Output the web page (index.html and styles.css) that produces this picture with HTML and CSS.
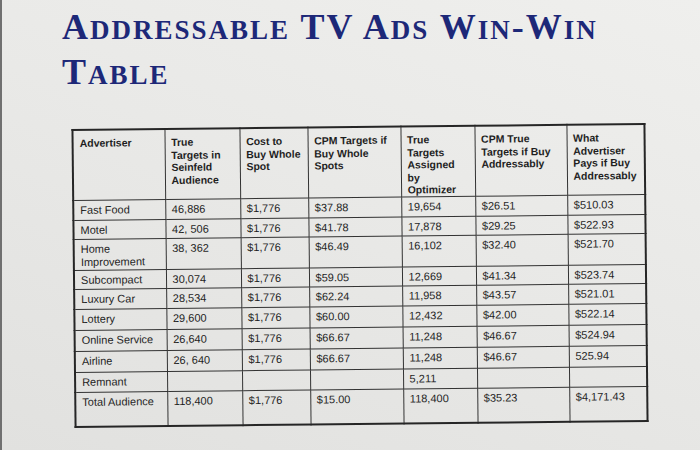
FILE: index.html
```html
<!DOCTYPE html>
<html>
<head>
<meta charset="utf-8">
<link rel="stylesheet" href="styles.css">
</head>
<body>
<div class="slide">
  <h1 class="title">A<span class="sc">DDRESSABLE</span> TV A<span class="sc">DS</span> W<span class="sc">IN</span>-W<span class="sc">IN</span><br>T<span class="sc">ABLE</span></h1>
  <table class="grid">
    <colgroup>
      <col class="c1"><col class="c2"><col class="c3"><col class="c4"><col class="c5"><col class="c6"><col class="c7">
    </colgroup>
    <tr class="head">
      <th>Advertiser</th>
      <th>True<br>Targets in<br>Seinfeld<br>Audience</th>
      <th>Cost to<br>Buy Whole<br>Spot</th>
      <th>CPM Targets if<br>Buy Whole<br>Spots</th>
      <th>True<br>Targets<br>Assigned<br>by<br>Optimizer</th>
      <th>CPM True<br>Targets if Buy<br>Addressably</th>
      <th>What<br>Advertiser<br>Pays if Buy<br>Addressably</th>
    </tr>
    <tr class="r20"><td>Fast Food</td><td>46,886</td><td>$1,776</td><td>$37.88</td><td>19,654</td><td>$26.51</td><td>$510.03</td></tr>
    <tr class="r19"><td>Motel</td><td>42, 506</td><td>$1,776</td><td>$41.78</td><td>17,878</td><td>$29.25</td><td>$522.93</td></tr>
    <tr class="r31"><td>Home<br>Improvement</td><td>38, 362</td><td>$1,776</td><td>$46.49</td><td>16,102</td><td>$32.40</td><td>$521.70</td></tr>
    <tr class="r19"><td>Subcompact</td><td>30,074</td><td>$1,776</td><td>$59.05</td><td>12,669</td><td>$41.34</td><td>$523.74</td></tr>
    <tr class="r20"><td>Luxury Car</td><td>28,534</td><td>$1,776</td><td>$62.24</td><td>11,958</td><td>$43.57</td><td>$521.01</td></tr>
    <tr class="r21"><td>Lottery</td><td>29,600</td><td>$1,776</td><td>$60.00</td><td>12,432</td><td>$42.00</td><td>$522.14</td></tr>
    <tr class="r21"><td>Online Service</td><td>26,640</td><td>$1,776</td><td>$66.67</td><td>11,248</td><td>$46.67</td><td>$524.94</td></tr>
    <tr class="r21"><td>Airline</td><td>26, 640</td><td>$1,776</td><td>$66.67</td><td>11,248</td><td>$46.67</td><td>525.94</td></tr>
    <tr class="r20"><td>Remnant</td><td></td><td></td><td></td><td>5,211</td><td></td><td></td></tr>
    <tr class="r35"><td>Total Audience</td><td>118,400</td><td>$1,776</td><td>$15.00</td><td>118,400</td><td>$35.23</td><td>$4,171.43</td></tr>
  </table>
</div>
</body>
</html>
```

FILE: styles.css
```css
html, body {
  margin: 0;
  padding: 0;
}
body {
  width: 700px;
  height: 450px;
  overflow: hidden;
  background: #e7e7e5;
}
.slide {
  width: 700px;
  height: 450px;
  border-left: 2px solid #707070;
  background: linear-gradient(200deg, #efefed 0%, #e9e9e7 45%, #e1e1df 100%);
  padding-top: 6px;
  box-sizing: border-box;
}
.title {
  margin: 0 0 0 60px;
  font-family: "Liberation Serif", "Times New Roman", serif;
  font-weight: bold;
  font-size: 36px;
  line-height: 42px;
  color: #1d2878;
  letter-spacing: 2px;
}
.sc {
  font-size: 27px;
}
.grid {
  margin: 30px 0 0 71px;
  border-collapse: collapse;
  table-layout: fixed;
  width: 572px;
  border: 2px solid #262626;
  font-family: "Liberation Sans", Arial, sans-serif;
  color: #1f1f1f;
  transform: rotate(-0.6deg);
}
.c1 { width: 92px; }
.c2 { width: 75px; }
.c3 { width: 68px; }
.c4 { width: 93px; }
.c5 { width: 74px; }
.c6 { width: 92px; }
.c7 { width: 78px; }
.grid th, .grid td {
  border: 1.5px solid #333;
  text-align: left;
  vertical-align: top;
  padding: 3px 5px 0 6px;
  box-sizing: border-box;
  overflow: hidden;
  white-space: nowrap;
}
.grid th {
  font-size: 10.5px;
  font-weight: bold;
  line-height: 12.5px;
  padding-top: 6px;
}
.grid td {
  font-size: 11px;
  line-height: 13px;
}
.head { height: 70px; }
.r19 { height: 19px; }
.r20 { height: 20px; }
.r21 { height: 21px; }
.r31 { height: 31px; }
.r35 { height: 35px; }
```
